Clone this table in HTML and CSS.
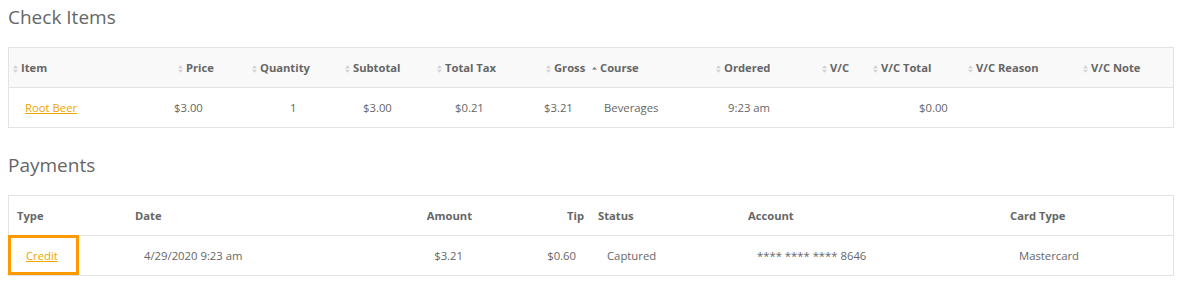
FILE: index.html
```html
<!DOCTYPE html>
<html>
<head>
<meta charset="utf-8">
<link rel="stylesheet" href="styles.css">
</head>
<body>
<section class="block">
  <h2 class="title">Check Items</h2>
  <table class="grid items">
    <colgroup>
      <col style="width:165px"><col style="width:74px"><col style="width:93px"><col style="width:92px"><col style="width:109px"><col style="width:46px"><col style="width:124px"><col style="width:106px"><col style="width:51px"><col style="width:95px"><col style="width:115px"><col style="width:94px">
    </colgroup>
    <thead>
      <tr>
        <th><svg class="sort" viewBox="0 0 6 9"><path d="M3 0L6 3.5H0z M3 9L0 5.5H6z"/></svg>Item</th>
        <th><svg class="sort" viewBox="0 0 6 9"><path d="M3 0L6 3.5H0z M3 9L0 5.5H6z"/></svg>Price</th>
        <th><svg class="sort" viewBox="0 0 6 9"><path d="M3 0L6 3.5H0z M3 9L0 5.5H6z"/></svg>Quantity</th>
        <th><svg class="sort" viewBox="0 0 6 9"><path d="M3 0L6 3.5H0z M3 9L0 5.5H6z"/></svg>Subtotal</th>
        <th><svg class="sort" viewBox="0 0 6 9"><path d="M3 0L6 3.5H0z M3 9L0 5.5H6z"/></svg>Total Tax</th>
        <th><svg class="sort" viewBox="0 0 6 9"><path d="M3 0L6 3.5H0z M3 9L0 5.5H6z"/></svg>Gross</th>
        <th><svg class="sort active" viewBox="0 0 6 9"><path d="M3 2L6 5H0z"/></svg>Course</th>
        <th><svg class="sort" viewBox="0 0 6 9"><path d="M3 0L6 3.5H0z M3 9L0 5.5H6z"/></svg>Ordered</th>
        <th><svg class="sort" viewBox="0 0 6 9"><path d="M3 0L6 3.5H0z M3 9L0 5.5H6z"/></svg>V/C</th>
        <th><svg class="sort" viewBox="0 0 6 9"><path d="M3 0L6 3.5H0z M3 9L0 5.5H6z"/></svg>V/C Total</th>
        <th><svg class="sort" viewBox="0 0 6 9"><path d="M3 0L6 3.5H0z M3 9L0 5.5H6z"/></svg>V/C Reason</th>
        <th><svg class="sort" viewBox="0 0 6 9"><path d="M3 0L6 3.5H0z M3 9L0 5.5H6z"/></svg>V/C Note</th>
      </tr>
    </thead>
    <tbody>
      <tr>
        <td><a class="link" href="#">Root Beer</a></td>
        <td>$3.00</td>
        <td>1</td>
        <td>$3.00</td>
        <td>$0.21</td>
        <td>$3.21</td>
        <td>Beverages</td>
        <td>9:23 am</td>
        <td></td>
        <td>$0.00</td>
        <td></td>
        <td></td>
      </tr>
    </tbody>
  </table>
</section>

<section class="block">
  <h2 class="title">Payments</h2>
  <table class="grid payments">
    <colgroup>
      <col style="width:118px"><col style="width:253px"><col style="width:100px"><col style="width:110px"><col style="width:150px"><col style="width:262px"><col style="width:171px">
    </colgroup>
    <thead>
      <tr>
        <th>Type</th>
        <th>Date</th>
        <th class="num">Amount</th>
        <th class="num">Tip</th>
        <th>Status</th>
        <th>Account</th>
        <th>Card Type</th>
      </tr>
    </thead>
    <tbody>
      <tr>
        <td class="type-cell"><a class="link" href="#">Credit</a><span class="highlight"></span></td>
        <td>4/29/2020 9:23 am</td>
        <td class="num">$3.21</td>
        <td class="num">$0.60</td>
        <td>Captured</td>
        <td>**** **** **** 8646</td>
        <td>Mastercard</td>
      </tr>
    </tbody>
  </table>
</section>
</body>
</html>
```

FILE: styles.css
```css
html, body {
  margin: 0;
  background: #ffffff;
}

body {
  padding: 5px 8px 0;
  font-family: "Open Sans", "Liberation Sans", sans-serif;
  color: #666666;
}

.block {
  margin-bottom: 25px;
}

.title {
  margin: 0 0 18px;
  font-size: 19px;
  line-height: 24px;
  font-weight: 400;
  color: #666666;
}

.grid {
  width: 1166px;
  table-layout: fixed;
  border-collapse: separate;
  border-spacing: 0;
  border: 1px solid #e3e3e3;
  font-size: 11.3px;
}

.grid th,
.grid td {
  height: 39px;
  padding: 0;
  text-align: left;
  vertical-align: middle;
  white-space: nowrap;
}

.grid th {
  font-weight: 700;
  font-size: 11.2px;
  color: #666666;
  padding-left: 4px;
}

.grid td {
  border-top: 1px solid #e3e3e3;
  color: #666666;
}

.items thead {
  background: #f9f9f9;
}

.sort {
  width: 5px;
  height: 8px;
  margin-right: 3px;
  vertical-align: -1px;
  fill: #d2d2d2;
}

.sort.active {
  fill: #777777;
}

.link {
  color: #f0a500;
  text-decoration: underline;
}

/* item table value offsets */
.items td:nth-child(1) { padding-left: 16px; }
.items td:nth-child(2) { padding-left: 0; }
.items td:nth-child(3) { padding-left: 42px; }
.items td:nth-child(4) { padding-left: 22px; }
.items td:nth-child(5) { padding-left: 22px; }
.items td:nth-child(6) { padding-left: 2px; }
.items td:nth-child(7) { padding-left: 16px; }
.items td:nth-child(8) { padding-left: 16px; }
.items td:nth-child(10) { padding-left: 50px; }

/* payments table */
.payments th {
  padding: 0 8px;
}

.payments td {
  padding: 0 17px;
}

.payments .num {
  text-align: right;
}

.payments td.num {
  padding-right: 17px;
}

.payments th:nth-child(4) {
  padding-right: 6px;
}

.payments td:nth-child(4) {
  padding-right: 14px;
}

.type-cell {
  position: relative;
}

.highlight {
  position: absolute;
  left: -1px;
  top: -1px;
  width: 71px;
  height: 40px;
  border: 3px solid #ff9900;
  box-sizing: border-box;
  pointer-events: none;
}
```
